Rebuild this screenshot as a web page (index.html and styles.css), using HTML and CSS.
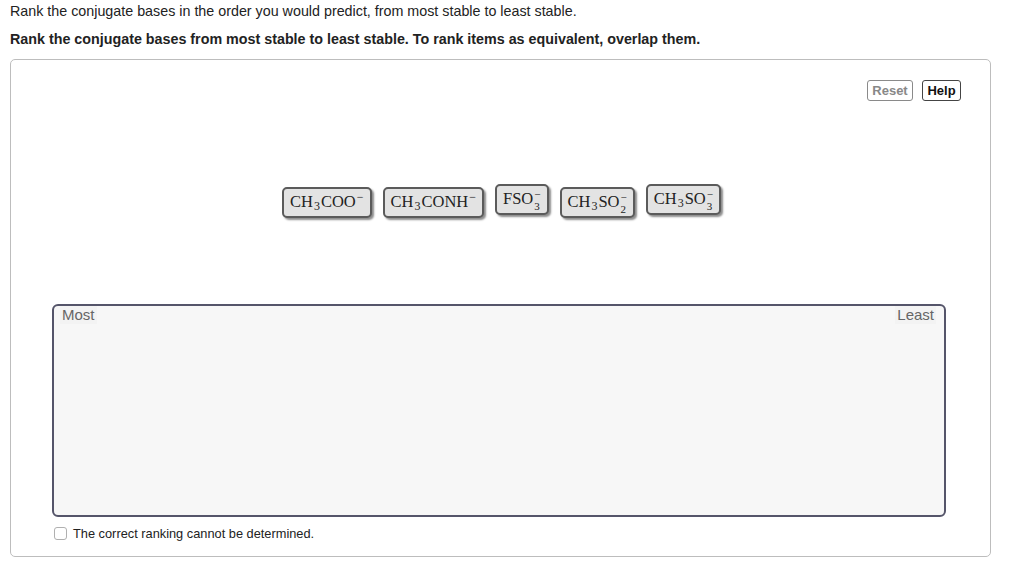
FILE: index.html
```html
<!DOCTYPE html>
<html>
<head>
<meta charset="utf-8">
<link rel="stylesheet" href="styles.css">
</head>
<body>
<p class="intro">Rank the conjugate bases in the order you would predict, from most stable to least stable.</p>
<p class="instr">Rank the conjugate bases from most stable to least stable. To rank items as equivalent, overlap them.</p>
<div class="panel">
  <div class="toolbar">
    <button class="btn reset">Reset</button>
    <button class="btn help">Help</button>
  </div>
  <div class="tiles">
    <div class="tile low">CH<sub>3</sub>COO<sup>−</sup></div>
    <div class="tile low">CH<sub>3</sub>CONH<sup>−</sup></div>
    <div class="tile">FSO<span class="ss"><span class="sp">−</span><span class="sb">3</span></span></div>
    <div class="tile low">CH<sub>3</sub>SO<span class="ss"><span class="sp">−</span><span class="sb">2</span></span></div>
    <div class="tile">CH<sub>3</sub>SO<span class="ss"><span class="sp">−</span><span class="sb">3</span></span></div>
  </div>
  <div class="rank">
    <div class="rank-labels">
      <span class="lbl">Most</span>
      <span class="lbl">Least</span>
    </div>
  </div>
  <label class="check"><span class="box"></span>The correct ranking cannot be determined.</label>
</div>
</body>
</html>
```

FILE: styles.css
```css
body {
  margin: 0;
  font-family: "Liberation Sans", Arial, sans-serif;
  color: #222;
  background: #fff;
}
.intro {
  margin: 0;
  padding: 3px 0 0 10px;
  font-size: 14.3px;
  line-height: 16px;
}
.instr {
  margin: 0;
  padding: 12px 0 0 10px;
  font-size: 14.3px;
  line-height: 16px;
  font-weight: bold;
}
.panel {
  margin: 12px 0 0 10px;
  width: 979px;
  height: 496px;
  border: 1px solid #bdbdbd;
  border-radius: 5px;
  display: flex;
  flex-direction: column;
}
.toolbar {
  display: flex;
  justify-content: flex-end;
  gap: 9px;
  padding: 20px 29px 0 0;
}
.btn {
  font-family: "Liberation Sans", Arial, sans-serif;
  font-weight: bold;
  font-size: 13px;
  height: 21px;
  padding: 0 4px;
  background: #fff;
  border-radius: 3px;
  line-height: 18px;
}
.reset {
  color: #888;
  border: 1px solid #8a8a8a;
  width: 46px;
}
.help {
  color: #111;
  border: 1px solid #444;
  width: 39px;
}
.tiles {
  display: flex;
  justify-content: center;
  align-items: flex-start;
  gap: 11px;
  height: 36px;
  margin-top: 83px;
  padding-left: 2px;
}
.tile {
  font-family: "Liberation Serif", "Times New Roman", serif;
  font-size: 16.5px;
  color: #222;
  background: #e3e3e3;
  border: 2px solid #5b5b5b;
  border-radius: 5px;
  box-shadow: 2px 2px 2px rgba(0,0,0,0.45);
  padding: 0 6px;
  height: 27px;
  line-height: 26px;
  white-space: nowrap;
}
.tile.low {
  margin-top: 3px;
}
.tile sub {
  font-size: 12px;
  vertical-align: -3px;
  line-height: 0;
  margin: 0 1px;
}
.tile sup {
  font-size: 12px;
  vertical-align: 6px;
  line-height: 0;
  margin-left: 1px;
}
.ss {
  display: inline-flex;
  flex-direction: column;
  vertical-align: 6px;
  font-size: 11px;
  line-height: 12px;
  margin-left: 1px;
}
.rank {
  margin: 84px 0 0 41px;
  width: 890px;
  height: 209px;
  border: 2px solid #55556a;
  border-radius: 6px;
  background: #f7f7f7;
}
.rank-labels {
  display: flex;
  justify-content: space-between;
  padding: 0 8px 0 6px;
}
.lbl {
  font-size: 15px;
  color: #666;
  line-height: 18px;
  background: #f3f3f3;
  padding: 0 2px;
}
.check {
  display: flex;
  align-items: center;
  gap: 6px;
  margin: 9px 0 0 43px;
  font-size: 12.8px;
  color: #222;
}
.box {
  width: 11px;
  height: 11px;
  border: 1px solid #b0b0b0;
  border-radius: 3px;
  background: #fff;
}
```
